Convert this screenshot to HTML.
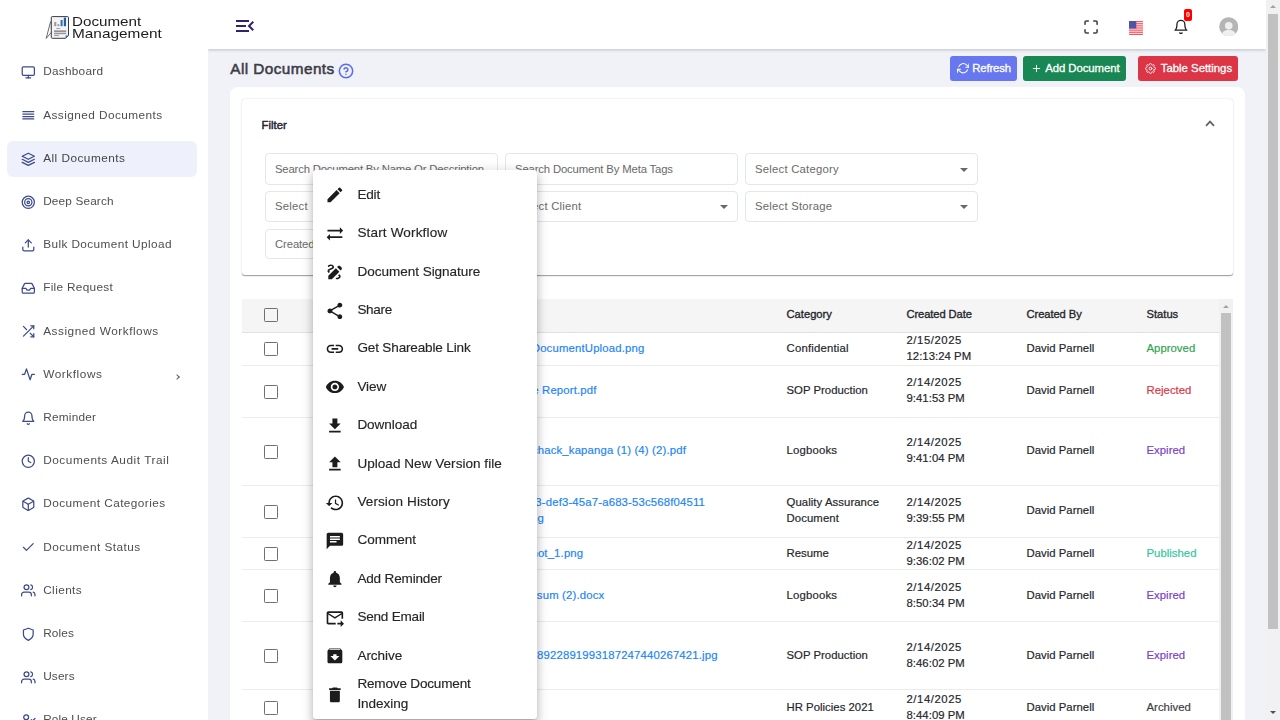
<!DOCTYPE html>
<html lang="en">
<head>
<meta charset="utf-8">
<title>All Documents - Document Management</title>
<style>
*{box-sizing:border-box;margin:0;padding:0}
html,body{width:1280px;height:720px;overflow:hidden}
body{font-family:"Liberation Sans",sans-serif;background:#f1f2f7;color:#212529;position:relative;font-size:11.2px}
svg{display:block}
.abs{position:absolute}

/* ---------- sidebar ---------- */
#sidebar{will-change:transform;z-index:5;position:absolute;left:0;top:0;width:208px;height:720px;background:#fff;overflow:hidden}
#logo{position:absolute;left:44px;top:12px;width:130px;height:32px}
#logo .lt{position:absolute;left:28.4px;font-size:13.2px;line-height:13px;color:#1c1c1c;white-space:nowrap;transform:scaleX(1.14);transform-origin:0 0}
.nav{position:absolute;left:7px;width:190px;height:36px;border-radius:6px}
.nav.active{background:#eef1fc}
.nav svg{position:absolute;left:14.4px;top:11.1px;width:14.6px;height:14.6px;fill:none;stroke:#3d4b8b;stroke-width:2.05;stroke-linecap:round;stroke-linejoin:round}
.nav span{position:absolute;left:36.2px;top:-.6px;line-height:36px;font-size:11.8px;letter-spacing:.56px;color:#4e4e50;white-space:nowrap}
.nav.active span{color:#444447}
.nav i{position:absolute;left:167.6px;top:18.8px;width:4px;height:4px;border-right:1.35px solid #5f6066;border-top:1.35px solid #5f6066;transform:rotate(45deg)}

/* ---------- topbar ---------- */
#topbar{will-change:transform;position:absolute;left:208px;top:0;width:1058px;height:48.5px;background:#fff;box-shadow:0 1px 3px rgba(60,64,90,.28)}

/* ---------- page scrollbar ---------- */
#pscroll{will-change:transform;position:absolute;left:1266px;top:0;width:14px;height:720px;background:#f1f1f1}
#pscroll .thumb{position:absolute;left:2px;top:13.5px;width:10px;height:615px;background:#c1c1c1}
.arr-up{position:absolute;width:0;height:0;border-left:3.4px solid transparent;border-right:3.4px solid transparent;border-bottom:3.6px solid #a3a3a3}
.arr-dn{position:absolute;width:0;height:0;border-left:3.4px solid transparent;border-right:3.4px solid transparent;border-top:3.6px solid #505050}

/* ---------- topbar icons ---------- */
#topbar svg{position:absolute}
#badge{position:absolute;left:976px;top:9.1px;width:8px;height:11.5px;border-radius:2px;background:#fe0000;color:#fff;font-size:7px;font-weight:bold;line-height:11.5px;text-align:center}

/* ---------- page ---------- */
#page{position:absolute;left:0;top:0;width:1280px;height:720px}
#title{position:absolute;left:230.3px;top:58.6px;font-size:15.3px;color:#3c3c46;-webkit-text-stroke:.55px #3c3c46;line-height:20px;letter-spacing:.44px;white-space:nowrap}
.btn{position:absolute;top:56px;height:25px;border-radius:3px;color:#fff;font-size:11.4px;line-height:25px;white-space:nowrap;letter-spacing:-.1px;-webkit-text-stroke:.3px #fff}
.btn svg{position:absolute;top:7px;width:11px;height:11px;fill:none;stroke:#fff;stroke-width:2;stroke-linecap:round;stroke-linejoin:round}
.btn span{position:absolute;top:0}
#card{position:absolute;left:230px;top:87px;width:1015px;height:650px;background:#fff;border-radius:8px}
#filter{position:absolute;left:242px;top:98.5px;width:991px;height:176.5px;background:#fff;border-radius:3px;box-shadow:0 1.6px 0.8px -.8px rgba(0,0,0,.2),0 .8px .8px 0 rgba(0,0,0,.14),0 .8px 2.4px 0 rgba(0,0,0,.12)}
#filter h4{position:absolute;left:19.5px;top:19px;font-size:11.3px;font-weight:normal;color:#1f2430;-webkit-text-stroke:.45px #1f2430;line-height:14px;letter-spacing:.05px}
.inp{position:absolute;width:233px;height:31px;border:1px solid #e3e6eb;border-radius:4px;background:#fff;font-size:11.3px;color:#696969;line-height:30.2px;padding-left:9.5px;white-space:nowrap;overflow:hidden;letter-spacing:.23px}
.inp b{position:absolute;right:9px;top:13px;width:0;height:0;border-left:4px solid transparent;border-right:4px solid transparent;border-top:4px solid #686868}

/* ---------- table ---------- */
#tbl{position:absolute;left:242px;top:299px;width:977px;height:421px;overflow:hidden;background:#fff}
.row{position:absolute;left:0;width:978px;border-bottom:1px solid #ececec}
.row.hd{background:#f5f5f5;border-bottom:1px solid #e0e0e0}
.row div{position:absolute;white-space:nowrap;font-size:11.35px;line-height:16px;color:#24262a;letter-spacing:.02px;-webkit-text-stroke:.18px}
.row .dd{letter-spacing:.54px}
.row.hd div{font-weight:normal;color:#24262b;-webkit-text-stroke:.33px #24262b;font-size:11.2px;letter-spacing:0}
.row .cb{left:22px;width:14px;height:14px;border:1.5px solid #6f6f6f;border-radius:1.3px;background:transparent}
.row .lk{color:#1c85f8;letter-spacing:.16px}
.c-cat{left:544.5px}.c-dt{left:664.5px}.c-by{left:784.5px}.c-st{left:904.5px}
#tscroll{position:absolute;left:1219px;top:299px;width:13.5px;height:421px;background:#f1f1f1}
#tscroll .thumb{position:absolute;left:2.1px;top:14px;width:10.1px;height:407px;background:#c1c1c1}

/* ---------- menu ---------- */
#menu{will-change:transform;position:absolute;left:313px;top:169.5px;width:224px;height:549px;background:#fff;border-radius:3.2px;z-index:10;
 box-shadow:0 4px 4px -2.4px rgba(0,0,0,.2),0 6.4px 8px .8px rgba(0,0,0,.14),0 2.4px 11.2px 1.6px rgba(0,0,0,.12)}
.mi{position:absolute;left:0;width:224px;height:38.4px}
.mi svg{position:absolute;left:12.2px;top:9.1px;width:19.8px;height:19.8px;fill:#1c1c1c}
.mi span{position:absolute;left:44.4px;top:8.4px;line-height:19.2px;font-size:13.55px;color:#262626;white-space:nowrap;-webkit-text-stroke:.15px #262626}
</style>
</head>
<body>

<!-- ================= PAGE ================= -->
<div id="page">
  <div id="title">All Documents</div>
  <svg class="abs" style="left:338px;top:62.6px" width="16" height="16" viewBox="0 0 24 24" fill="none" stroke="#5b6bf0" stroke-width="2.3" stroke-linecap="round" stroke-linejoin="round"><circle cx="12" cy="12" r="10"/><path d="M9.09 9a3 3 0 0 1 5.83 1c0 2-3 3-3 3"/><line x1="12" y1="17" x2="12.01" y2="17"/></svg>

  <div class="btn" style="left:950px;width:67.3px;background:#6777ef">
    <svg style="left:6.6px;top:6.4px;width:12.4px;height:12.4px" viewBox="0 0 24 24"><polyline points="23 4 23 10 17 10"/><polyline points="1 20 1 14 7 14"/><path d="M3.51 9a9 9 0 0 1 14.85-3.36L23 10M1 14l4.64 4.36A9 9 0 0 0 20.49 15"/></svg>
    <span style="left:22.3px;letter-spacing:-.2px">Refresh</span></div>
  <div class="btn" style="left:1023px;width:103px;background:#198754">
    <svg style="left:8px" viewBox="0 0 24 24"><line x1="12" y1="5" x2="12" y2="19"/><line x1="5" y1="12" x2="19" y2="12"/></svg>
    <span style="left:22.3px">Add Document</span></div>
  <div class="btn" style="left:1138px;width:100px;background:#dc3545">
    <svg style="left:7px" viewBox="0 0 24 24"><circle cx="12" cy="12" r="3"/><path d="M19.4 15a1.65 1.65 0 0 0 .33 1.82l.06.06a2 2 0 0 1 0 2.83 2 2 0 0 1-2.83 0l-.06-.06a1.65 1.65 0 0 0-1.82-.33 1.65 1.65 0 0 0-1 1.51V21a2 2 0 0 1-2 2 2 2 0 0 1-2-2v-.09A1.65 1.65 0 0 0 9 19.4a1.65 1.65 0 0 0-1.82.33l-.06.06a2 2 0 0 1-2.83 0 2 2 0 0 1 0-2.83l.06-.06a1.65 1.65 0 0 0 .33-1.82 1.65 1.65 0 0 0-1.51-1H3a2 2 0 0 1-2-2 2 2 0 0 1 2-2h.09A1.65 1.65 0 0 0 4.600 9a1.65 1.65 0 0 0-.33-1.82l-.06-.06a2 2 0 0 1 0-2.83 2 2 0 0 1 2.83 0l.06.06a1.65 1.65 0 0 0 1.820.33H9a1.65 1.65 0 0 0 1-1.51V3a2 2 0 0 1 2-2 2 2 0 0 1 2 2v.09a1.65 1.65 0 0 0 1 1.51 1.65 1.65 0 0 0 1.820-.33l.06-.06a2 2 0 0 1 2.83 0 2 2 0 0 1 0 2.83l-.06.06a1.65 1.65 0 0 0-.33 1.82V9a1.65 1.65 0 0 0 1.51 1H21a2 2 0 0 1 2 2 2 2 0 0 1-2 2h-.09a1.65 1.65 0 0 0-1.51 1z"/></svg>
    <span style="left:22.8px;letter-spacing:-.02px">Table Settings</span></div>

  <div id="card"></div>
  <div id="filter">
    <h4>Filter</h4>
    <svg class="abs" style="left:962.5px;top:21px" width="10" height="7" viewBox="0 0 10 7" fill="none" stroke="#626262" stroke-width="1.7"><path d="M1 5.8 L5 1.6 L9 5.8"/></svg>
    <div class="inp" style="left:22.5px;top:54.5px;height:31.6px;letter-spacing:-.17px">Search Document By Name Or Description</div>
    <div class="inp" style="left:262.5px;top:54.5px;height:31.6px;letter-spacing:-.14px">Search Document By Meta Tags</div>
    <div class="inp" style="left:502.5px;top:54.5px;height:31.6px">Select Category<b style="top:13.9px"></b></div>
    <div class="inp" style="left:22.5px;top:92px;line-height:28.4px">Select&nbsp;&nbsp;Status<b></b></div>
    <div class="inp" style="left:262.5px;top:92px;line-height:28.4px">Select Client<b></b></div>
    <div class="inp" style="left:502.5px;top:92px;line-height:28.4px">Select Storage<b></b></div>
    <div class="inp" style="left:22.5px;top:130.5px;height:30px;line-height:28.6px;letter-spacing:-.1px">Created Date</div>
  </div>

  <div id="tbl">
  <div class="row hd" style="top:0;height:34px"><div class="cb" style="top:9px"></div><div class="c-cat" style="top:7.1px">Category</div><div class="c-dt" style="top:7.1px;letter-spacing:-.1px">Created Date</div><div class="c-by" style="top:7.1px;letter-spacing:-.08px">Created By</div><div class="c-st" style="top:7.1px">Status</div></div>
  <div class="row" style="top:34px;height:33.0px"><div class="cb" style="top:9.0px"></div><div class="lk" style="right:575.6px;top:7.0px">DocumentUpload.png</div><div class="c-cat" style="top:7.0px;letter-spacing:0.19px">Confidential</div><div class="c-dt dd" style="top:-1.0px">2/15/2025</div><div class="c-dt" style="top:15.0px;letter-spacing:.03px">12:13:24 PM</div><div class="c-by" style="top:7.0px">David Parnell</div><div class="c-st" style="top:7.0px;color:#2ea44f">Approved</div></div>
  <div class="row" style="top:67px;height:52.0px"><div class="cb" style="top:18.5px"></div><div class="lk" style="right:623.4px;top:16.1px">e Report.pdf</div><div class="c-cat" style="top:16.1px">SOP Production</div><div class="c-dt dd" style="top:8.1px">2/14/2025</div><div class="c-dt" style="top:24.1px;letter-spacing:.03px">9:41:53 PM</div><div class="c-by" style="top:16.1px">David Parnell</div><div class="c-st" style="top:16.1px;color:#dc3545">Rejected</div></div>
  <div class="row" style="top:119px;height:68.0px"><div class="cb" style="top:26.5px"></div><div class="lk" style="right:534.0px;top:23.8px">chack_kapanga (1) (4) (2).pdf</div><div class="c-cat" style="top:23.8px;letter-spacing:0.18px">Logbooks</div><div class="c-dt dd" style="top:15.8px">2/14/2025</div><div class="c-dt" style="top:31.8px;letter-spacing:.03px">9:41:04 PM</div><div class="c-by" style="top:23.8px">David Parnell</div><div class="c-st" style="top:23.8px;color:#7a3fc8">Expired</div></div>
  <div class="row" style="top:187px;height:52.0px"><div class="cb" style="top:18.5px"></div><div class="lk" style="right:515.0px;top:8.1px">3-def3-45a7-a683-53c568f04511</div><div class="lk" style="right:676.0px;top:24.1px">.png</div><div class="c-cat" style="top:8.1px;letter-spacing:0.07px">Quality Assurance</div><div class="c-cat" style="top:24.1px;letter-spacing:0.09px">Document</div><div class="c-dt dd" style="top:8.1px">2/14/2025</div><div class="c-dt" style="top:24.1px;letter-spacing:.03px">9:39:55 PM</div><div class="c-by" style="top:16.1px">David Parnell</div></div>
  <div class="row" style="top:239px;height:32.0px"><div class="cb" style="top:8.5px"></div><div class="lk" style="right:636.7px;top:6.5px">hot_1.png</div><div class="c-cat" style="top:6.5px">Resume</div><div class="c-dt dd" style="top:-1.5px">2/14/2025</div><div class="c-dt" style="top:14.5px;letter-spacing:.03px">9:36:02 PM</div><div class="c-by" style="top:6.5px">David Parnell</div><div class="c-st" style="top:6.5px;color:#2fc79a">Published</div></div>
  <div class="row" style="top:271px;height:52.0px"><div class="cb" style="top:18.5px"></div><div class="lk" style="right:615.7px;top:17.1px">sum (2).docx</div><div class="c-cat" style="top:17.1px;letter-spacing:0.18px">Logbooks</div><div class="c-dt dd" style="top:9.1px">2/14/2025</div><div class="c-dt" style="top:25.1px;letter-spacing:.03px">8:50:34 PM</div><div class="c-by" style="top:17.1px">David Parnell</div><div class="c-st" style="top:17.1px;color:#7a3fc8">Expired</div></div>
  <div class="row" style="top:323px;height:68.0px"><div class="cb" style="top:26.5px"></div><div class="lk" style="right:502.3px;top:24.8px">8922891993187247440267421.jpg</div><div class="c-cat" style="top:24.8px">SOP Production</div><div class="c-dt dd" style="top:16.8px">2/14/2025</div><div class="c-dt" style="top:32.8px;letter-spacing:.03px">8:46:02 PM</div><div class="c-by" style="top:24.8px">David Parnell</div><div class="c-st" style="top:24.8px;color:#7a3fc8">Expired</div></div>
  <div class="row" style="top:391px;height:37.5px"><div class="cb" style="top:11.2px"></div><div class="c-cat" style="top:9.3px">HR Policies 2021</div><div class="c-dt dd" style="top:1.3px">2/14/2025</div><div class="c-dt" style="top:17.3px;letter-spacing:.03px">8:44:09 PM</div><div class="c-by" style="top:9.3px">David Parnell</div><div class="c-st" style="top:9.3px;color:#3a3d42">Archived</div></div>
  </div>
  <div id="tscroll"><div class="arr-up" style="left:3.8px;top:5.6px"></div><div class="thumb"></div></div>
</div>


<!-- ================= SIDEBAR ================= -->
<div id="sidebar">
  <div id="logo">
    <svg class="abs" style="left:0;top:2px" width="28" height="28" viewBox="0 0 28 28">
      <path d="M2.2 24.4 L6.6 7.6" stroke="#3a3a3a" stroke-width=".75" fill="none"/>
      <path d="M2.2 24.4 L10.6 14.6" stroke="#3a3a3a" stroke-width=".75" fill="none"/>
      <path d="M6.6 7.6 C7.6 9.5 7.6 12 7 14.5" stroke="#555" stroke-width=".6" fill="none"/>
      <path d="M8.2 2.6 H23.6 a.9 .9 0 0 1 .9 .9 V21.4 L21.6 24.3 H8.2 a.9 .9 0 0 1 -.9 -.9 V3.5 a.9 .9 0 0 1 .9 -.9 Z" fill="#f4f4f5" stroke="#3b3b40" stroke-width="1"/>
      <path d="M21.6 24.3 L24.5 21.4 H21.6 Z" fill="#2d6cb4"/>
      <rect x="10.2" y="8" width="2.1" height="4.2" fill="#9a9ba1"/>
      <rect x="13.4" y="10.2" width="2" height="2" fill="#9a9ba1"/>
      <rect x="16.6" y="6" width="2" height="6.2" fill="#2d6cb4"/>
      <rect x="19.8" y="3.6" width="2.2" height="8.6" fill="#1e5ea8"/>
      <rect x="12.2" y="14.1" width="4" height=".8" fill="#8d8e93"/>
      <rect x="10" y="16.4" width="12.2" height="1.5" fill="#87888d"/>
      <rect x="10" y="18.7" width="12.2" height="1.5" fill="#95969b"/>
      <rect x="10" y="20.9" width="5" height="1.2" fill="#a3a4a9"/>
    </svg>
    <div class="lt" style="top:3.2px;transform:scaleX(1.152)">Document</div>
    <div class="lt" style="top:14.8px;transform:scaleX(1.166)">Management</div>
  </div>

  <div class="nav" style="top:54px"><svg viewBox="0 0 24 24"><rect x="2" y="3" width="20" height="14" rx="2" ry="2"/><line x1="8" y1="21" x2="16" y2="21"/><line x1="12" y1="17" x2="12" y2="21"/></svg><span style="letter-spacing:0.263px">Dashboard</span></div>
  <div class="nav" style="top:97.2px"><svg viewBox="0 0 24 24"><line x1="21" y1="10" x2="3" y2="10"/><line x1="21" y1="6" x2="3" y2="6"/><line x1="21" y1="14" x2="3" y2="14"/><line x1="21" y1="18" x2="3" y2="18"/></svg><span style="letter-spacing:0.441px">Assigned Documents</span></div>
  <div class="nav active" style="top:140.8px"><svg viewBox="0 0 24 24"><polygon points="12 2 2 7 12 12 22 7 12 2"/><polyline points="2 17 12 22 22 17"/><polyline points="2 12 12 17 22 12"/></svg><span style="letter-spacing:0.471px">All Documents</span></div>
  <div class="nav" style="top:183.6px"><svg viewBox="0 0 24 24"><circle cx="12" cy="12" r="10"/><circle cx="12" cy="12" r="6"/><circle cx="12" cy="12" r="2"/></svg><span style="letter-spacing:0.151px">Deep Search</span></div>
  <div class="nav" style="top:226.8px"><svg viewBox="0 0 24 24"><path d="M21 15v4a2 2 0 0 1-2 2H5a2 2 0 0 1-2-2v-4"/><polyline points="17 8 12 3 7 8"/><line x1="12" y1="3" x2="12" y2="15"/></svg><span style="letter-spacing:0.4px">Bulk Document Upload</span></div>
  <div class="nav" style="top:270px"><svg viewBox="0 0 24 24"><polyline points="22 12 16 12 14 15 10 15 8 12 2 12"/><path d="M5.45 5.11L2 12v6a2 2 0 0 0 2 2h16a2 2 0 0 0 2-2v-6l-3.45-6.89A2 2 0 0 0 16.76 4H7.24a2 2 0 0 0-1.79 1.11z"/></svg><span style="letter-spacing:0.301px">File Request</span></div>
  <div class="nav" style="top:313.2px"><svg viewBox="0 0 24 24"><polyline points="16 3 21 3 21 8"/><line x1="4" y1="20" x2="21" y2="3"/><polyline points="21 16 21 21 16 21"/><line x1="15" y1="15" x2="21" y2="21"/><line x1="4" y1="4" x2="9" y2="9"/></svg><span style="letter-spacing:0.526px">Assigned Workflows</span></div>
  <div class="nav" style="top:356.4px"><svg viewBox="0 0 24 24"><polyline points="22 12 18 12 15 21 9 3 6 12 2 12"/></svg><span style="letter-spacing:0.56px">Workflows</span><i></i></div>
  <div class="nav" style="top:399.6px"><svg viewBox="0 0 24 24"><path d="M18 8A6 6 0 0 0 6 8c0 7-3 9-3 9h18s-3-2-3-9"/><path d="M13.73 21a2 2 0 0 1-3.46 0"/></svg><span style="letter-spacing:0.241px">Reminder</span></div>
  <div class="nav" style="top:442.8px"><svg viewBox="0 0 24 24"><circle cx="12" cy="12" r="10"/><polyline points="12 6 12 12 16 14"/></svg><span style="letter-spacing:0.546px">Documents Audit Trail</span></div>
  <div class="nav" style="top:486px"><svg viewBox="0 0 24 24"><path d="M21 16V8a2 2 0 0 0-1-1.73l-7-4a2 2 0 0 0-2 0l-7 4A2 2 0 0 0 3 8v8a2 2 0 0 0 1 1.73l7 4a2 2 0 0 0 2 0l7-4A2 2 0 0 0 21 16z"/><polyline points="3.27 6.96 12 12.01 20.73 6.96"/><line x1="12" y1="22.08" x2="12" y2="12"/></svg><span style="letter-spacing:0.438px">Document Categories</span></div>
  <div class="nav" style="top:529.2px"><svg viewBox="0 0 24 24"><polyline points="20 6 9 17 4 12"/></svg><span style="letter-spacing:0.462px">Document Status</span></div>
  <div class="nav" style="top:572.4px"><svg viewBox="0 0 24 24"><path d="M17 21v-2a4 4 0 0 0-4-4H5a4 4 0 0 0-4 4v2"/><circle cx="9" cy="7" r="4"/><path d="M23 21v-2a4 4 0 0 0-3-3.87"/><path d="M16 3.13a4 4 0 0 1 0 7.75"/></svg><span style="letter-spacing:0.406px">Clients</span></div>
  <div class="nav" style="top:615.6px"><svg viewBox="0 0 24 24"><path d="M12 22s8-4 8-10V5l-8-3-8 3v7c0 6 8 10 8 10z"/></svg><span style="letter-spacing:0.117px">Roles</span></div>
  <div class="nav" style="top:658.8px"><svg viewBox="0 0 24 24"><path d="M17 21v-2a4 4 0 0 0-4-4H5a4 4 0 0 0-4 4v2"/><circle cx="9" cy="7" r="4"/><path d="M23 21v-2a4 4 0 0 0-3-3.87"/><path d="M16 3.13a4 4 0 0 1 0 7.75"/></svg><span style="letter-spacing:0.142px">Users</span></div>
  <div class="nav" style="top:702px"><svg viewBox="0 0 24 24"><path d="M16 21v-2a4 4 0 0 0-4-4H5a4 4 0 0 0-4 4v2"/><circle cx="8.5" cy="7" r="4"/><polyline points="17 11 19 13 23 9"/></svg><span style="letter-spacing:0.117px">Role User</span></div>
</div>

<!-- ================= TOPBAR ================= -->
<div id="topbar">
  <!-- menu fold -->
  <svg style="left:24.8px;top:14.1px" width="24" height="24" viewBox="0 0 24 24" fill="#2f2270"><path d="M3 18h13v-2H3v2zm0-5h10v-2H3v2zm0-7v2h13V6H3zm18 9.59L17.42 12 21 8.41 19.59 7l-5 5 5 5L21 15.59z"/></svg>
  <!-- fullscreen -->
  <svg style="left:875.05px;top:19.05px" width="16.1" height="16.1" viewBox="0 0 24 24" fill="none" stroke="#3c4046" stroke-width="2.3" stroke-linecap="round" stroke-linejoin="round"><path d="M8 3H5a2 2 0 0 0-2 2v3m18 0V5a2 2 0 0 0-2-2h-3m0 18h3a2 2 0 0 0 2-2v-3M3 16v3a2 2 0 0 0 2 2h3"/></svg>
  <!-- flag -->
  <svg style="left:921px;top:21px" width="14" height="14" viewBox="0 0 14 14"><rect width="14" height="14" fill="#fde4e6"/><g fill="#fa5662"><rect y="0" width="14" height="1.1"/><rect y="2.15" width="14" height="1.1"/><rect y="4.3" width="14" height="1.1"/><rect y="6.45" width="14" height="1.1"/><rect y="8.6" width="14" height="1.1"/><rect y="10.75" width="14" height="1.1"/><rect y="12.9" width="14" height="1.1"/></g><rect width="7.3" height="7.5" fill="#4e54a6"/></svg>
  <!-- bell -->
  <svg style="left:964.6px;top:19.4px" width="15.8" height="15.8" viewBox="0 0 24 24" fill="none" stroke="#1c1c1c" stroke-width="1.95" stroke-linecap="round" stroke-linejoin="round"><path d="M18 8A6 6 0 0 0 6 8c0 7-3 9-3 9h18s-3-2-3-9"/><path d="M13.73 21a2 2 0 0 1-3.46 0"/></svg>
  <div id="badge">0</div>
  <!-- avatar -->
  <svg style="left:1010.9px;top:16.5px" width="19.5" height="19.5" viewBox="0 0 20 20"><defs><clipPath id="avc"><circle cx="10" cy="10" r="9.8"/></clipPath></defs><circle cx="10" cy="10" r="9.8" fill="#b5b5b5"/><g clip-path="url(#avc)"><circle cx="10" cy="9" r="3.9" fill="#efefef"/><ellipse cx="10" cy="19.6" rx="7.6" ry="6.6" fill="#efefef"/></g></svg>
</div>

<!-- ================= CONTEXT MENU ================= -->
<div id="menu">
  <div class="mi" style="top:6.4px"><svg viewBox="0 0 24 24"><path d="M3 17.25V21h3.75L17.81 9.94l-3.75-3.75L3 17.25zM20.71 7.04c.39-.39.39-1.02 0-1.41l-2.34-2.34c-.39-.39-1.02-.39-1.41 0l-1.83 1.83 3.75 3.75 1.83-1.83z"/></svg><span style="letter-spacing:-0.19px">Edit</span></div>
  <div class="mi" style="top:44.8px"><svg viewBox="0 0 24 24"><path d="M22 8l-4-4v3H3v2h15v3l4-4zM2 16l4 4v-3h15v-2H6v-3l-4 4z"/></svg><span style="letter-spacing:0.15px">Start Workflow</span></div>
  <div class="mi" style="top:83.2px"><svg viewBox="0 0 24 24"><path d="M18.85 10.39l1.06-1.06c.78-.78.78-2.05 0-2.83L18.500 5.09c-.78-.78-2.05-.78-2.83 0l-1.06 1.06 4.24 4.24zm-5.66-2.83l-9.19 9.19V21h4.24l9.19-9.19-4.24-4.250zM19 17.5c0 2.190-2.540 3.5-5 3.5-.55 0-1-.45-1-1s.45-1 1-1c1.540 0 3-.73 3-1.5 0-.47-.48-.87-1.230-1.200l1.480-1.480c1.070.63 1.750 1.470 1.750 2.680zM4.580 13.350C3.610 12.790 3 12.060 3 11c0-1.800 1.890-2.630 3.560-3.360C7.590 7.180 9 6.560 9 6c0-.41-.78-1-2-1-1.260 0-1.800.61-1.830.64-.35.41-.98.46-1.400.12-.41-.34-.49-.95-.15-1.380C3.730 4.240 4.760 3 7 3s4 1.320 4 3c0 1.870-1.930 2.720-3.640 3.470C6.420 9.880 5 10.500 5 11c0 .31.43.600 1.070.86l-1.490 1.490z"/></svg><span style="letter-spacing:-0.03px">Document Signature</span></div>
  <div class="mi" style="top:121.6px"><svg viewBox="0 0 24 24"><path d="M18 16.08c-.76 0-1.44.3-1.96.77L8.91 12.7c.05-.23.09-.46.09-.7s-.04-.47-.09-.7l7.05-4.11c.54.5 1.25.81 2.04.81 1.66 0 3-1.34 3-3s-1.34-3-3-3-3 1.34-3 3c0 .24.04.47.09.7L8.040 9.81C7.500 9.310 6.790 9 6 9c-1.660 0-3 1.340-3 3s1.340 3 3 3c.79 0 1.500-.31 2.040-.81l7.120 4.160c-.05.21-.08.43-.08.65 0 1.610 1.310 2.920 2.920 2.920s2.920-1.310 2.920-2.920-1.310-2.920-2.920-2.920z"/></svg><span style="letter-spacing:-0.33px">Share</span></div>
  <div class="mi" style="top:160.0px"><svg viewBox="0 0 24 24"><path d="M3.9 12c0-1.71 1.39-3.1 3.1-3.1h4V7H7c-2.76 0-5 2.24-5 5s2.24 5 5 5h4v-1.9H7c-1.71 0-3.1-1.39-3.1-3.1zM8 13h8v-2H8v2zm9-6h-4v1.900h4c1.710 0 3.100 1.390 3.100 3.100s-1.390 3.100-3.100 3.100h-4V17h4c2.760 0 5-2.240 5-5s-2.240-5-5-5z"/></svg><span style="letter-spacing:-0.155px">Get Shareable Link</span></div>
  <div class="mi" style="top:198.4px"><svg viewBox="0 0 24 24"><path d="M12 4.5C7 4.5 2.73 7.61 1 12c1.73 4.39 6 7.5 11 7.5s9.27-3.11 11-7.5c-1.73-4.39-6-7.5-11-7.5zM12 17c-2.76 0-5-2.24-5-5s2.24-5 5-5 5 2.24 5 5-2.24 5-5 5zm0-8c-1.66 0-3 1.34-3 3s1.34 3 3 3 3-1.34 3-3-1.34-3-3-3z"/></svg><span style="letter-spacing:-0.08px">View</span></div>
  <div class="mi" style="top:236.8px"><svg viewBox="0 0 24 24"><path d="M19 9h-4V3H9v6H5l7 7 7-7zM5 18v2h14v-2H5z"/></svg><span style="letter-spacing:-0.055px">Download</span></div>
  <div class="mi" style="top:275.2px"><svg viewBox="0 0 24 24"><path d="M9 16h6v-6h4l-7-7-7 7h4zm-4 2h14v2H5z"/></svg><span style="letter-spacing:0.025px">Upload New Version file</span></div>
  <div class="mi" style="top:313.6px"><svg viewBox="0 0 24 24"><path d="M13 3c-4.97 0-9 4.03-9 9H1l3.89 3.89.07.14L9 12H6c0-3.87 3.13-7 7-7s7 3.13 7 7-3.13 7-7 7c-1.93 0-3.68-.79-4.94-2.06l-1.42 1.42C8.270 19.990 10.510 21 13 21c4.970 0 9-4.030 9-9s-4.030-9-9-9zm-1 5v5l4.280 2.540.72-1.210-3.500-2.080V8H12z"/></svg><span style="letter-spacing:0.086px">Version History</span></div>
  <div class="mi" style="top:352.0px"><svg viewBox="0 0 24 24"><path d="M20 2H4c-1.1 0-1.99.9-1.99 2L2 22l4-4h14c1.1 0 2-.9 2-2V4c0-1.1-.9-2-2-2zM6 9h12v2H6V9zm8 5H6v-2h8v2zm4-6H6V6h12v2z"/></svg><span style="letter-spacing:-0.017px">Comment</span></div>
  <div class="mi" style="top:390.4px"><svg viewBox="0 0 24 24"><path d="M12 22c1.1 0 2-.9 2-2h-4c0 1.1.89 2 2 2zm6-6v-5c0-3.07-1.64-5.64-4.5-6.320V4c0-.83-.67-1.500-1.500-1.500s-1.500.67-1.500 1.500v.68C7.630 5.360 6 7.920 6 11v5l-2 2v1h16v-1l-2-2z"/></svg><span style="letter-spacing:-0.174px">Add Reminder</span></div>
  <div class="mi" style="top:428.8px"><svg viewBox="0 0 24 24"><path d="M20 4H4c-1.1 0-2 .9-2 2v12c0 1.1.9 2 2 2h9v-2H4V8l8 5 8-5v5h2V6c0-1.1-.9-2-2-2zm-8 7L4 6h16l-8 5zm7 4l4 4-4 4v-3h-4v-2h4v-3z"/></svg><span style="letter-spacing:-0.22px">Send Email</span></div>
  <div class="mi" style="top:467.2px"><svg viewBox="0 0 24 24"><path d="M20.54 5.23l-1.39-1.68C18.88 3.21 18.47 3 18 3H6c-.47 0-.88.21-1.160.55L3.460 5.230C3.170 5.570 3 6.020 3 6.500V19c0 1.100.9 2 2 2h14c1.100 0 2-.9 2-2V6.500c0-.48-.17-.93-.46-1.270zM12 17.500L6.500 12H10v-2h4v2h3.500L12 17.500zM5.120 5l.81-1h12l.94 1H5.120z"/></svg><span style="letter-spacing:-0.04px">Archive</span></div>
  <div class="mi" style="top:505.6px"><svg viewBox="0 0 24 24"><path d="M6 19c0 1.1.9 2 2 2h8c1.1 0 2-.9 2-2V7H6v12zM19 4h-3.5l-1-1h-5l-1 1H5v2h14V4z"/></svg><span style="top:-1.2px;letter-spacing:-.184px">Remove Document<br><em style="font-style:normal;letter-spacing:-.05px">Indexing</em></span></div>
  </div>

<!-- ================= PAGE SCROLLBAR ================= -->
<div id="pscroll">
  <div class="arr-up" style="left:3.6px;top:5.4px"></div>
  <div class="thumb"></div>
  <div class="arr-dn" style="left:3.6px;top:710.8px"></div>
</div>

</body>
</html>
